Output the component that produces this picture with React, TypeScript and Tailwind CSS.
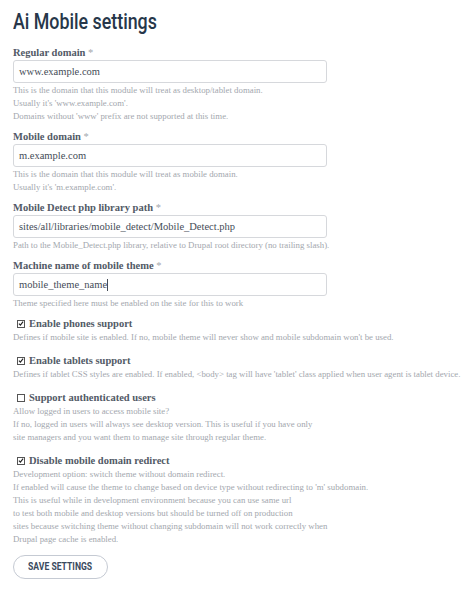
import React from 'react';

const serif = { fontFamily: '"Liberation Serif", "DejaVu Serif", serif' };
const sans = { fontFamily: 'Roboto, "Liberation Sans", sans-serif' };

function Help({ lines }: { lines: string[] }) {
  return (
    <div className="mt-[1px] text-[8.8px] leading-[13px] text-[#a3a7ae] whitespace-nowrap" style={serif}>
      {lines.map((l) => (
        <div key={l}>{l}</div>
      ))}
    </div>
  );
}

function TextField({
  label,
  value,
  help,
  caret,
}: {
  label: string;
  value: string;
  help: string[];
  caret?: boolean;
}) {
  return (
    <div className="mb-[7px]">
      <label className="block text-[10.5px] font-bold leading-[13px] text-[#525a66] whitespace-nowrap" style={serif}>
        {label} <span className="font-normal text-[#a3a7ae]">*</span>
      </label>
      <div
        className="mt-[1px] w-[314px] h-[23px] border border-[#d6d8dc] rounded-[3px] px-[5px] flex items-center text-[10.5px] text-[#454c57]"
        style={serif}
      >
        {value}
        {caret && <span className="w-px h-[12px] bg-[#454c57]" />}
      </div>
      <Help lines={help} />
    </div>
  );
}

function Check({ label, checked, help }: { label: string; checked: boolean; help: string[] }) {
  return (
    <div className="mb-[10px]">
      <div className="flex items-center gap-[4px] pl-[4px] h-[13px]">
        <span className="w-[8px] h-[8px] border border-[#555] bg-white flex items-center justify-center">
          {checked && (
            <svg viewBox="0 0 8 8" className="w-[7px] h-[7px]">
              <path d="M1.2 4.2 L3.2 6.2 L6.8 1.6" fill="none" stroke="#222" strokeWidth="1.5" />
            </svg>
          )}
        </span>
        <span className="text-[10.5px] font-bold leading-[13px] text-[#525a66] whitespace-nowrap" style={serif}>
          {label}
        </span>
      </div>
      <Help lines={help} />
    </div>
  );
}

export default function App() {
  return (
    <div className="w-[474px] h-[590px] bg-white px-[13px] pt-[9px] overflow-hidden">
      <h1 className="text-[22px] font-medium leading-[26px] text-[#27374a] mb-[11px]" style={sans}>
        <span className="inline-block scale-x-[0.81] origin-left whitespace-nowrap">Ai Mobile settings</span>
      </h1>

      <TextField
        label="Regular domain"
        value="www.example.com"
        help={[
          'This is the domain that this module will treat as desktop/tablet domain.',
          "Usually it's 'www.example.com'.",
          "Domains without 'www' prefix are not supported at this time.",
        ]}
      />
      <TextField
        label="Mobile domain"
        value="m.example.com"
        help={['This is the domain that this module will treat as mobile domain.', "Usually it's 'm.example.com'."]}
      />
      <TextField
        label="Mobile Detect php library path"
        value="sites/all/libraries/mobile_detect/Mobile_Detect.php"
        help={['Path to the Mobile_Detect.php library, relative to Drupal root directory (no trailing slash).']}
      />
      <TextField
        label="Machine name of mobile theme"
        value="mobile_theme_name"
        caret
        help={['Theme specified here must be enabled on the site for this to work']}
      />

      <Check
        label="Enable phones support"
        checked
        help={["Defines if mobile site is enabled. If no, mobile theme will never show and mobile subdomain won't be used."]}
      />
      <Check
        label="Enable tablets support"
        checked
        help={[
          "Defines if tablet CSS styles are enabled. If enabled, <body> tag will have 'tablet' class applied when user agent is tablet device.",
        ]}
      />
      <Check
        label="Support authenticated users"
        checked={false}
        help={[
          'Allow logged in users to access mobile site?',
          'If no, logged in users will always see desktop version. This is useful if you have only',
          'site managers and you want them to manage site through regular theme.',
        ]}
      />
      <Check
        label="Disable mobile domain redirect"
        checked
        help={[
          'Development option: switch theme without domain redirect.',
          "If enabled will cause the theme to change based on device type without redirecting to 'm' subdomain.",
          'This is useful while in development environment because you can use same url',
          'to test both mobile and desktop versions but should be turned off on production',
          'sites because switching theme without changing subdomain will not work correctly when',
          'Drupal page cache is enabled.',
        ]}
      />

      <button
        className="mt-[-1px] w-[95px] h-[24px] rounded-full border border-[#c5cad3] flex items-center justify-center text-[10.5px] font-bold text-[#3a4a5e]"
        style={sans}
      >
        <span className="inline-block scale-x-[0.82] whitespace-nowrap">SAVE SETTINGS</span>
      </button>
    </div>
  );
}
